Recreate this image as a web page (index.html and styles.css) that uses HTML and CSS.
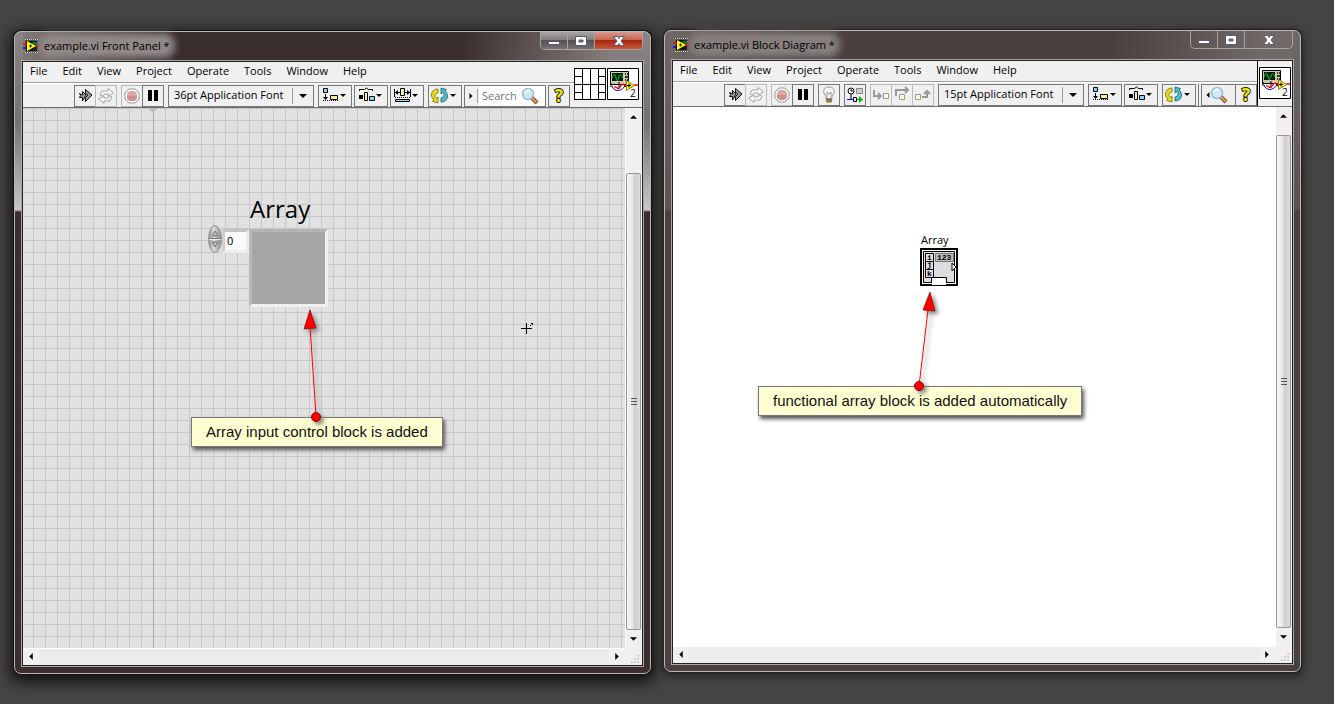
FILE: index.html
```html
<!DOCTYPE html>
<html lang="en">
<head>
	<meta charset="UTF-8">
	<title>example.vi</title>
	<link rel="stylesheet" href="styles.css">
</head>
<body>
	<!-- shared icons -->
	<svg class="defs" width="0" height="0">
		<symbol id="i-vi" viewBox="0 0 16 14">
			<path d="M2 0h13v14H2z" fill="#555"/>
			<path d="M2 .5h13M2 13.500h13" stroke="#ddd" stroke-dasharray="1 1"/>
			<path d="M3 2h11v10H3z" fill="#111"/>
			<path d="M9 3h5v4H9z" fill="#063"/>
			<path d="M4 2l9 5-9 5z" fill="#ff0"/>
			<path d="M0 5h4M12 7h4" stroke="#f00" stroke-width="1.500"/>
			<path d="M0 9h4" stroke="#00f" stroke-width="1.500"/>
			<path d="M6 7h3M7.500 5.500v3" stroke="#222"/>
		</symbol>
		<symbol id="i-run" viewBox="0 0 20 20">
			<path d="M4.500 7.500l3 1.500V5.500L11 9l-3.500 6v-3.500h-3l1-2z" fill="#999" stroke="#111"/>
			<path d="M10.500 7.500v-4L17 9l-6.500 6.500v-4L13 9z" fill="#999" stroke="#111"/>
		</symbol>
		<symbol id="i-loop" viewBox="0 0 20 20">
			<path d="M4 9l2-4h6V2.500L17.500 7 12 10V8H8L6.500 10z" fill="#fafafa" stroke="#a5a5a5"/>
			<path d="M16 11l-2 4H8v2.500L2.500 13 8 10v2h4l1.500-2z" fill="#fafafa" stroke="#a5a5a5"/>
		</symbol>
		<symbol id="i-stop" viewBox="0 0 20 20">
			<path d="M7 3h6l4 4v6l-4 4H7l-4-4V7z" fill="#fff" stroke="#999"/>
			<path d="M7.500 5h5l2.500 2.500v5L12.500 15h-5L5 12.500v-5z" fill="#dfa6a6"/>
			<path d="M5 10h10v2.500L12.500 15h-5L5 12.500z" fill="#cf9292"/>
		</symbol>
		<symbol id="i-pause" viewBox="0 0 20 20">
			<path d="M5 4h4v11H5zM11 4h4v11h-4z" fill="#000"/>
		</symbol>
		<symbol id="i-bulb" viewBox="0 0 20 20">
			<path d="M10 2c7 0 6 7 3 9v3H7v-3C4 9 3 2 10 2z" fill="#f4f4f4" stroke="#999"/>
			<path d="M8 12V7l2 2 2-2v5" fill="none" stroke="#999"/>
			<path d="M7 13h6v3l-1 2H8l-1-2z" fill="#baa86a"/>
			<path d="M7 14h6M7 16h6" stroke="#555"/>
		</symbol>
		<symbol id="i-retain" viewBox="0 0 20 20">
			<circle cx="6" cy="6" r="3" fill="#fff" stroke="#000"/>
			<path d="M6 4v2h2M6 9v5" fill="none" stroke="#000"/>
			<path d="M11.500 3.500h6v5h-6z" fill="#ccc" stroke="#888"/>
			<path d="M2 14.500h7" stroke="#00f"/>
			<path d="M12 14.500h3" stroke="#0a0"/>
			<path d="M8.500 12.500h3v4h-3z" fill="#fff" stroke="#000"/>
			<path d="M14 11l4 3.500-4 3.500z" fill="#0b0"/>
		</symbol>
		<symbol id="i-into" viewBox="0 0 20 20">
			<path d="M3 5v6h7M7 8l3 3-3 3" fill="none" stroke="#999" stroke-width="2"/>
			<path d="M12.500 8.500h5v5h-5z" fill="#ffffd0" stroke="#999"/>
		</symbol>
		<symbol id="i-over" viewBox="0 0 20 20">
			<path d="M4 11V5h12M13 2l3 3-3 3" fill="none" stroke="#999" stroke-width="2"/>
			<path d="M7.500 9.500h5v5h-5z" fill="#ffffd0" stroke="#999"/>
		</symbol>
		<symbol id="i-out" viewBox="0 0 20 20">
			<path d="M2.500 9.500h5v5h-5z" fill="#ffffd0" stroke="#999"/>
			<path d="M9 12h5V6M11 9l3-3 3 3" fill="none" stroke="#999" stroke-width="2"/>
		</symbol>
		<symbol id="i-align" viewBox="0 0 32 20">
			<path d="M4.500 2.500h4v4h-4z" fill="#7df" stroke="#000"/>
			<path d="M6.500 8v4" stroke="#000"/>
			<path d="M4 11h5l-2.500 3z"/>
			<path d="M11.500 9.500h7v4h-7z" fill="#ffef90" stroke="#000"/>
			<path d="M4 14.500h16" stroke="#000" stroke-dasharray="1 1"/>
			<path d="M21 8h6l-3 3z"/>
		</symbol>
		<symbol id="i-dist" viewBox="0 0 32 20">
			<path d="M4.500 5V3.500h5l2-1.500 2 1.500h4V5" fill="none" stroke="#000"/>
			<path d="M4 9h4v4H4z"/>
			<path d="M9.500 6.500h3v8h-3z" fill="#ffef90" stroke="#000"/>
			<path d="M14.500 10.500h5v4h-5z" fill="#7df" stroke="#000"/>
			<path d="M21 8h6l-3 3z"/>
		</symbol>
		<symbol id="i-size" viewBox="0 0 32 20">
			<path d="M3.500 3v8M19.500 3v8" stroke="#000"/>
			<path d="M4 6.500h15" stroke="#000"/>
			<path d="M4 6.500L7 4v5zM19 6.500L16 4v5z"/>
			<path d="M9.500 2.500h4v7h-4z" fill="#ffef90" stroke="#000"/>
			<path d="M4 11.500h16" stroke="#000" stroke-dasharray="1 1"/>
			<path d="M4.500 13.500h14v2h-14z" fill="#7df" stroke="#000"/>
			<path d="M21 8h6l-3 3z"/>
		</symbol>
		<symbol id="i-order" viewBox="0 0 32 20">
			<path d="M9 3C5 3 2.500 5.500 2.500 9c0 2 1 4 2.500 5l-1.500 1.500L9 17v-6l-2 1.500C5 11 6 7.500 9 7z" fill="#e5da18" stroke="#77700a" stroke-width=".8"/>
			<path d="M12 16c4 0 6.500-2.500 6.500-6 0-2-1-4-2.500-5l1.500-1.500L12 2v6l2-1.500c2 1.500 1 5-2 5.500z" fill="#4dbccc" stroke="#17606c" stroke-width=".8"/>
			<path d="M21 8h6l-3 3z"/>
		</symbol>
		<symbol id="i-glass" viewBox="0 0 18 18">
			<path d="M10 10l6 6" stroke="#76502e" stroke-width="4"/>
			<path d="M10 10l5.500 5.500" stroke="#f09a45" stroke-width="2"/>
			<circle cx="7" cy="7" r="5.500" fill="#cdeafa" stroke="#9dbdd6" stroke-width="1.500"/>
			<path d="M4 6c1-2 3-3 5-2" fill="none" stroke="#fff" stroke-width="2"/>
		</symbol>
		<symbol id="i-scope" viewBox="0 0 32 32">
			<path d="M0 0h32v32H0z" fill="#fff"/>
			<path d="M3.500 3.500h18v13h-18z" fill="#cfcbaa" stroke="#000"/>
			<path d="M5 5h11v8H5z" fill="#001a08"/>
			<path d="M5 10c2-5 3-5 4 0s2 2 3-1 2-4 4 1" fill="none" stroke="#0d3"/>
			<path d="M18 6h1M20 6h1M18 9h3M18 12h1M20 12h1" stroke="#333" stroke-width="2"/>
			<path d="M4 15v4M12 14v6M16 16l3 3" stroke="#000"/>
			<path d="M5 18c2 6 9 6 13 0" fill="none" stroke="#00a"/>
			<path d="M7 19c3-1 4 4 6 0s4-3 6-1M27 17h4" fill="none" stroke="#e00" stroke-width="1.300"/>
			<path d="M19.500 12.500l8 5-8 5z" fill="#ff0" stroke="#874"/>
			<path d="M20 17.500h4M22 15.500v4" stroke="#000"/>
			<text x="23" y="29" font-size="10">2</text>
			<path d="M.5.5h31v31H.5z" fill="none" stroke="#000"/>
		</symbol>
		<symbol id="i-help" viewBox="0 0 20 20">
			<text class="q-mark" x="10" y="16" text-anchor="middle">?</text>
		</symbol>
		<symbol id="i-min" viewBox="0 0 14 12">
			<path d="M1.500 6.500h11v3h-11z" fill="#fff" stroke="#555a70"/>
		</symbol>
		<symbol id="i-max" viewBox="0 0 14 12">
			<path d="M1.500 1.500h11v9h-11z" fill="#fff" stroke="#555a70"/>
			<path d="M5 5h4v2H5z" fill="#777" stroke="#555a70"/>
		</symbol>
		<symbol id="i-close" viewBox="0 0 14 12">
			<path d="M1.500 1.500h4L7 3.500l1.500-2h4L9 6l3.500 4.500h-4L7 8.500l-1.500 2h-4L5 6z" fill="#fff" stroke="#555a70"/>
		</symbol>
		<symbol id="i-up" viewBox="0 0 8 4"><path d="M4 0l4 4H0z"/></symbol>
		<symbol id="i-down" viewBox="0 0 8 4"><path d="M0 0h8L4 4z"/></symbol>
		<symbol id="i-left" viewBox="0 0 4 8"><path d="M4 0v8L0 4z"/></symbol>
		<symbol id="i-right" viewBox="0 0 4 8"><path d="M0 0l4 4-4 4z"/></symbol>
		<symbol id="i-grip" viewBox="0 0 10 10">
			<path d="M8 0h2v2H8zM8 4h2v2H8zM4 4h2v2H4zM8 8h2v2H8zM4 8h2v2H4zM0 8h2v2H0z" fill="#bbb"/>
		</symbol>
	</svg>

	<main class="desktop">
		<!-- front panel -->
		<section class="window front">
			<header class="titlebar">
				<svg class="title-icon"><use href="#i-vi"/></svg>
				<h1><span>example.vi Front Panel *</span></h1>
				<div class="caption">
					<button aria-label="Minimize"><svg><use href="#i-min"/></svg></button>
					<button aria-label="Maximize"><svg><use href="#i-max"/></svg></button>
					<button class="close" aria-label="Close"><svg><use href="#i-close"/></svg></button>
				</div>
			</header>
			<div class="client">
				<div class="head">
					<div class="bars">
						<nav class="menubar">
							<button>File</button>
							<button>Edit</button>
							<button>View</button>
							<button>Project</button>
							<button>Operate</button>
							<button>Tools</button>
							<button>Window</button>
							<button>Help</button>
						</nav>
						<div class="toolbar">
							<div class="joined">
								<button class="tool" aria-label="Run"><svg><use href="#i-run"/></svg></button>
								<button class="tool off" aria-label="Run continuously"><svg><use href="#i-loop"/></svg></button>
							</div>
							<div class="joined">
								<button class="tool off" aria-label="Abort"><svg><use href="#i-stop"/></svg></button>
								<button class="tool" aria-label="Pause"><svg><use href="#i-pause"/></svg></button>
							</div>
							<div class="font-box">
								<select aria-label="Text settings"><option>36pt Application Font</option></select>
								<svg class="caret"><use href="#i-down"/></svg>
							</div>
							<div class="near">
								<button class="tool wide" aria-label="Align objects"><svg><use href="#i-align"/></svg></button>
								<button class="tool wide" aria-label="Distribute objects"><svg><use href="#i-dist"/></svg></button>
								<button class="tool wide" aria-label="Resize objects"><svg><use href="#i-size"/></svg></button>
							</div>
							<div class="near">
								<button class="tool wide" aria-label="Reorder"><svg><use href="#i-order"/></svg></button>
								<div class="search">
									<svg class="side"><use href="#i-right"/></svg>
									<input type="text" placeholder="Search" aria-label="Search">
									<svg class="glass"><use href="#i-glass"/></svg>
								</div>
								<button class="tool" aria-label="Help"><svg><use href="#i-help"/></svg></button>
							</div>
						</div>
					</div>
					<div class="vi-icons">
						<svg viewBox="0 0 32 32" shape-rendering="crispEdges">
							<path d="M.5.5h31v31H.5z" fill="#fff" stroke="#000"/>
							<path d="M8.500 0v32M16.500 0v32M24.500 0v32M0 16.500h32M0 8.500h8M0 24.500h8M24 8.500h8M24 24.500h8" stroke="#000"/>
						</svg>
						<svg><use href="#i-scope"/></svg>
					</div>
				</div>
				<div class="work">
					<div class="canvas grid">
						<div class="origin"></div>
						<label class="big-label" for="index">Array</label>
						<svg class="spinner" viewBox="0 0 14 28">
							<defs>
								<linearGradient id="metal">
									<stop offset="0" stop-color="#888"/>
									<stop offset=".4" stop-color="#ddd"/>
									<stop offset="1" stop-color="#888"/>
								</linearGradient>
							</defs>
							<ellipse cx="7" cy="14" rx="6.500" ry="13.500" fill="url(#metal)" stroke="#999"/>
							<path d="M1 13.500h12" stroke="#777"/>
							<path d="M1 14.500h12" stroke="#eee"/>
							<path d="M7 6l3 5H4z" fill="#bbb" stroke="#777"/>
							<path d="M7 22l3-5H4z" fill="#bbb" stroke="#777"/>
						</svg>
						<input class="index" id="index" type="text" value="0">
						<div class="shell"></div>
						<svg class="cursor" viewBox="0 0 14 12" shape-rendering="crispEdges">
							<path d="M5.500 1v11M0 6.500h11M9 3.500h1M10 1.500h2M11 2.500h1" stroke="#000"/>
						</svg>
						<p class="note">Array input control block is added</p>
						<svg class="arrow" viewBox="0 0 30 114">
							<path d="M18 107l-6-90" stroke="#f00"/>
							<path d="M12 1l6 18-12 1z" fill="#f00" stroke="#800" stroke-width=".7"/>
							<circle cx="18" cy="108" r="4.500" fill="#f00" stroke="#800"/>
						</svg>
					</div>
					<div class="vscroll">
						<button aria-label="Scroll up"><svg><use href="#i-up"/></svg></button>
						<div class="thumb low"></div>
						<button aria-label="Scroll down"><svg><use href="#i-down"/></svg></button>
					</div>
					<div class="hscroll">
						<button aria-label="Scroll left"><svg><use href="#i-left"/></svg></button>
						<button aria-label="Scroll right"><svg><use href="#i-right"/></svg></button>
					</div>
					<div class="grip"><svg><use href="#i-grip"/></svg></div>
				</div>
			</div>
		</section>

		<!-- block diagram -->
		<section class="window back">
			<header class="titlebar">
				<svg class="title-icon"><use href="#i-vi"/></svg>
				<h1><span>example.vi Block Diagram *</span></h1>
				<div class="caption">
					<button aria-label="Minimize"><svg><use href="#i-min"/></svg></button>
					<button aria-label="Maximize"><svg><use href="#i-max"/></svg></button>
					<button class="close" aria-label="Close"><svg><use href="#i-close"/></svg></button>
				</div>
			</header>
			<div class="client">
				<div class="head">
					<div class="bars">
						<nav class="menubar">
							<button>File</button>
							<button>Edit</button>
							<button>View</button>
							<button>Project</button>
							<button>Operate</button>
							<button>Tools</button>
							<button>Window</button>
							<button>Help</button>
						</nav>
						<div class="toolbar">
							<div class="joined">
								<button class="tool" aria-label="Run"><svg><use href="#i-run"/></svg></button>
								<button class="tool off" aria-label="Run continuously"><svg><use href="#i-loop"/></svg></button>
							</div>
							<div class="joined">
								<button class="tool off" aria-label="Abort"><svg><use href="#i-stop"/></svg></button>
								<button class="tool" aria-label="Pause"><svg><use href="#i-pause"/></svg></button>
							</div>
							<button class="tool" aria-label="Highlight execution"><svg><use href="#i-bulb"/></svg></button>
							<button class="tool" aria-label="Retain wire values"><svg><use href="#i-retain"/></svg></button>
							<div class="joined">
								<button class="tool off" aria-label="Step into"><svg><use href="#i-into"/></svg></button>
								<button class="tool off" aria-label="Step over"><svg><use href="#i-over"/></svg></button>
								<button class="tool off" aria-label="Step out"><svg><use href="#i-out"/></svg></button>
							</div>
							<div class="font-box">
								<select aria-label="Text settings"><option>15pt Application Font</option></select>
								<svg class="caret"><use href="#i-down"/></svg>
							</div>
							<div class="near">
								<button class="tool wide" aria-label="Align objects"><svg><use href="#i-align"/></svg></button>
								<button class="tool wide" aria-label="Distribute objects"><svg><use href="#i-dist"/></svg></button>
							</div>
							<div class="near">
								<button class="tool wide" aria-label="Reorder"><svg><use href="#i-order"/></svg></button>
								<div class="joined find">
									<button class="tool find-button" aria-label="Search">
										<svg class="side"><use href="#i-left"/></svg>
										<svg class="glass"><use href="#i-glass"/></svg>
									</button>
									<button class="tool" aria-label="Help"><svg><use href="#i-help"/></svg></button>
								</div>
							</div>
						</div>
					</div>
					<div class="vi-icons boxed">
						<svg><use href="#i-scope"/></svg>
					</div>
				</div>
				<div class="work">
					<div class="canvas">
						<p class="node-label">Array</p>
						<svg class="node" viewBox="0 0 38 38">
							<path d="M0 0h38v38H0z"/>
							<path d="M2 2h34v34H2z" fill="#fff"/>
							<path d="M3.500 3.500h31v31h-31z" fill="#ddd" stroke="#000"/>
							<path d="M5.500 5.500h8v8h-8zM5.500 13.500h8v8h-8zM5.500 21.500h8v8h-8z" fill="#ddd" stroke="#000"/>
							<path d="M15.500 5.500h18v8h-18z" fill="#bbb" stroke="#777"/>
							<text x="7" y="12">i</text>
							<text x="7" y="19">j</text>
							<text x="7" y="28">k</text>
							<text x="17" y="12">123</text>
							<path d="M32 15l4 4-4 4z" fill="#fff" stroke="#000"/>
							<path d="M11.500 29.500h15v5h-15z" fill="#fff" stroke="#000"/>
							<path d="M12 30h14v7H12z" fill="#fff"/>
						</svg>
						<p class="note">functional array block is added automatically</p>
						<svg class="arrow" viewBox="0 0 30 114">
							<path d="M7 95l9-76" stroke="#f00"/>
							<path d="M18 1l5 19-12-1z" fill="#f00" stroke="#800" stroke-width=".7"/>
							<circle cx="7" cy="95" r="4.500" fill="#f00" stroke="#800"/>
						</svg>
					</div>
					<div class="vscroll">
						<button aria-label="Scroll up"><svg><use href="#i-up"/></svg></button>
						<div class="thumb"></div>
						<button aria-label="Scroll down"><svg><use href="#i-down"/></svg></button>
					</div>
					<div class="hscroll">
						<button aria-label="Scroll left"><svg><use href="#i-left"/></svg></button>
						<button aria-label="Scroll right"><svg><use href="#i-right"/></svg></button>
					</div>
					<div class="grip"><svg><use href="#i-grip"/></svg></div>
				</div>
			</div>
		</section>
	</main>
</body>
</html>
```

FILE: styles.css
```css
*{
	margin: 0;
	padding: 0;
	box-sizing: border-box;
}
body{
	background: #444;
	font: 11px/16px "Open Sans", "Noto Sans", sans-serif;
	color: #000;
}
button, input, select{
	font: inherit;
	color: inherit;
	background: none;
	border: 0;
	border-radius: 0;
}
svg{
	display: block;
	flex: none;
}
.defs{
	position: absolute;
}
.desktop{
	display: grid;
	grid-template-columns: 1fr 1fr;
	gap: 13px;
	min-height: 100vh;
	padding: 30px 33px 30px 14px;
}

/* window frame */
.window{
	display: flex;
	flex-direction: column;
	min-width: 0;
	padding: 0 7px 7px;
	border: 1px solid #bbb5b3;
	border-radius: 7px;
}
.front{
	margin-top: 1px;
	background:
		linear-gradient(#8a8383, #787171 90px, #c8c6c6 178px, #3a2f2d 180px) left / 8px 100% no-repeat,
		linear-gradient(#8a8383, #787171 90px, #c8c6c6 178px, #3a2f2d 180px) right / 8px 100% no-repeat,
		linear-gradient(100deg, #857e7d, #3a2f2d 22%, #3a2f2d 70%, #857e7d 94%) top / 100% 32px no-repeat,
		#3a2f2d;
	box-shadow: 0 0 0 1px #111, 0 4px 14px 4px #111;
}
.back{
	margin-bottom: 2px;
	background:
		linear-gradient(#716967, #5c5351 178px, #4a403e 180px) left / 8px 100% no-repeat,
		linear-gradient(#716967, #5c5351 178px, #4a403e 180px) right / 8px 100% no-repeat,
		linear-gradient(100deg, #716967, #4a403e 22%, #4a403e 70%, #716967 94%) top / 100% 32px no-repeat,
		#4a403e;
	box-shadow: 0 0 0 1px #222, 0 2px 8px 2px #222;
}
.titlebar{
	display: flex;
	align-items: center;
	height: 29px;
	padding-left: 1px;
	padding-bottom: 2px;
}
.title-icon{
	width: 16px;
	height: 14px;
}
.titlebar h1{
	flex: 1;
	font-size: 11px;
	font-weight: normal;
	white-space: nowrap;
	padding-left: 5px;
}
.titlebar span{
	background: #8f8886;
	box-shadow: 0 0 7px 5px #8f8886;
	border-radius: 6px;
}
.back .titlebar span{
	background: #857e7c;
	box-shadow: 0 0 7px 5px #857e7c;
}
.caption{
	display: flex;
	align-self: flex-start;
	height: 18px;
	border: 1px solid #a9a4a3;
	border-top: 0;
	border-radius: 0 0 5px 5px;
	overflow: hidden;
}
.caption button{
	display: flex;
	align-items: center;
	justify-content: center;
	width: 27px;
	border-right: 1px solid #a9a4a3;
}
.caption .close{
	width: 47px;
	border-right: 0;
}
.caption svg{
	width: 14px;
	height: 12px;
}
.front .caption button{
	background: linear-gradient(#a9a4a4, #807a7a 50%, #585252 50%, #777070);
}
.front .caption .close{
	background: linear-gradient(#d89a8c, #c3604c 50%, #a82810 50%, #c8563c);
}
.client{
	flex: 1;
	display: flex;
	flex-direction: column;
	min-height: 0;
	border: 1px solid #222;
	box-shadow: 0 0 0 1px #aaa5a3;
	background: #f0f0f0;
}

/* menu and toolbar */
.head{
	display: flex;
	border-bottom: 1px solid #6e6e6e;
}
.bars{
	flex: 1;
	min-width: 0;
}
.menubar{
	display: flex;
	gap: 15px;
	height: 21px;
	padding-left: 7px;
	padding-bottom: 3px;
	border-bottom: 1px solid #a0a0a0;
}
.menubar button{
	line-height: 16px;
}
.toolbar{
	display: flex;
	align-items: center;
	gap: 4px;
	height: 24px;
	padding-left: 51px;
	border-top: 1px solid #fff;
}
.joined, .near{
	display: flex;
}
.near{
	gap: 2px;
}
.joined .tool + .tool{
	margin-left: -1px;
}
.tool{
	display: flex;
	align-items: center;
	justify-content: center;
	width: 22px;
	height: 22px;
	border: 1px solid #777;
}
.tool svg{
	width: 20px;
	height: 20px;
}
.off{
	border-color: #bbb;
}
.wide{
	width: 34px;
}
.wide svg{
	width: 32px;
}
.q-mark{
	font: bold 17px "Open Sans", sans-serif;
	fill: #f5e800;
	stroke: #222;
	stroke-width: 2px;
	paint-order: stroke;
}
.font-box{
	display: flex;
	align-items: center;
	width: 146px;
	height: 22px;
	border: 1px solid #777;
}
.font-box select{
	appearance: none;
	flex: 1;
	height: 16px;
	padding-left: 5px;
	padding-bottom: 2px;
	line-height: 14px;
	border-right: 1px solid #999;
}
.font-box .caret{
	width: 8px;
	height: 4px;
	margin: 0 6px;
}
.search{
	display: flex;
	align-items: center;
	width: 82px;
	height: 22px;
	padding-left: 4px;
	border: 1px solid #777;
	background: linear-gradient(90deg, #f0f0f0 14px, #fff 14px);
}
.side{
	width: 4px;
	height: 6px;
}
.search input{
	width: 44px;
	height: 14px;
	margin-left: 4px;
	padding-left: 4px;
	border-left: 1px solid #999;
}
.search input::placeholder{
	color: #777;
	opacity: 1;
}
.glass{
	width: 18px;
	height: 18px;
}
.find{
	padding-left: 2px;
	border-left: 1px solid #777;
}
.find-button{
	width: 35px;
	padding-right: 4px;
}
.find-button .side{
	width: 4px;
	height: 6px;
}
.find-button .glass{
	width: 18px;
	height: 18px;
}
.vi-icons{
	display: flex;
	align-items: center;
	gap: 1px;
	padding-right: 3px;
	padding-bottom: 2px;
}
.vi-icons svg{
	width: 32px;
	height: 32px;
}
.boxed{
	padding: 0 1px 2px;
	border-left: 1px solid #000;
}

/* work area */
.work{
	flex: 1;
	display: grid;
	grid-template-columns: 1fr 17px;
	grid-template-rows: 1fr 17px;
	min-height: 0;
}
.canvas{
	position: relative;
	background: #fff;
	overflow: hidden;
}
.grid{
	background:
		linear-gradient(#c8c8c8 1px, transparent 1px) 0 0 / 12px 12px,
		linear-gradient(90deg, #c8c8c8 1px, transparent 1px) 10px 0 / 12px 12px,
		#e1e1e1;
}
.vscroll{
	display: flex;
	flex-direction: column;
	padding-right: 1px;
	background: #f0f0f0;
	border-left: 1px solid #fff;
}
.vscroll button, .hscroll button{
	display: flex;
	align-items: center;
	justify-content: center;
}
.vscroll button{
	height: 18px;
}
.vscroll svg{
	width: 7px;
	height: 4px;
}
.thumb{
	flex: 1;
	margin-top: 10px;
	border: 1px solid #979797;
	border-radius: 2px;
	background:
		linear-gradient(#555 1px, transparent 1px 3px, #555 3px 4px, transparent 4px 6px, #555 6px 7px, transparent 7px) center / 6px 7px no-repeat,
		linear-gradient(90deg, #f5f5f5, #e8e8e8 45%, #cfcfd2 55%, #dcdcde);
}
.low{
	margin-top: 47px;
}
.hscroll{
	display: flex;
	justify-content: space-between;
	padding-bottom: 1px;
	background: #ececec;
	border-top: 1px solid #fff;
}
.hscroll button{
	width: 16px;
	background: #f0f0f0;
}
.hscroll svg{
	width: 4px;
	height: 7px;
}
.grip{
	display: flex;
	align-items: flex-end;
	justify-content: flex-end;
	padding: 2px 3px;
}
.grip svg{
	width: 8px;
	height: 8px;
}

/* objects placed on the canvases */
.origin{
	position: absolute;
	left: 130px;
	top: 0;
	bottom: 0;
	border-left: 1px solid #aaa;
}
.origin::before{
	content: "";
	position: absolute;
	left: -6px;
	top: 0;
	border: 5px solid transparent;
	border-top-color: #bbb;
	border-bottom: 0;
}
.big-label{
	position: absolute;
	left: 227px;
	top: 85px;
	font-size: 24px;
	line-height: 32px;
}
.spinner{
	position: absolute;
	left: 185px;
	top: 117px;
	width: 14px;
	height: 28px;
}
.index{
	position: absolute;
	left: 199px;
	top: 121px;
	width: 27px;
	height: 24px;
	padding-left: 2px;
	padding-bottom: 2px;
	background: #fafafa;
	border: 3px solid #ededed;
	border-top-color: #c4c4c4;
	border-left-color: #d0d0d0;
}
.shell{
	position: absolute;
	left: 226px;
	top: 121px;
	width: 79px;
	height: 78px;
	background: #a6a6a6;
	border: 3px solid #f0f0f0;
	border-top-color: #b4b4b4;
	border-left-color: #b8b8b8;
}
.cursor{
	position: absolute;
	left: 498px;
	top: 214px;
	width: 14px;
	height: 12px;
}
.note{
	position: absolute;
	left: 168px;
	top: 309px;
	padding: 0 14px;
	font: 15px/28px "Liberation Sans", sans-serif;
	white-space: nowrap;
	color: #111;
	background: #ffffd2;
	border: 1px solid #777;
	box-shadow: 2px 3px 4px #555;
}
.back .note{
	left: 85px;
	top: 279px;
}
.arrow{
	position: absolute;
	left: 275px;
	top: 201px;
	width: 30px;
	height: 114px;
	filter: drop-shadow(3px 3px 2px #888);
}
.back .arrow{
	left: 239px;
	top: 184px;
}
.node-label{
	position: absolute;
	left: 248px;
	top: 125px;
}
.node{
	position: absolute;
	left: 247px;
	top: 141px;
	width: 38px;
	height: 38px;
}
.node text{
	font: bold 8px "Liberation Mono", monospace;
}
```
